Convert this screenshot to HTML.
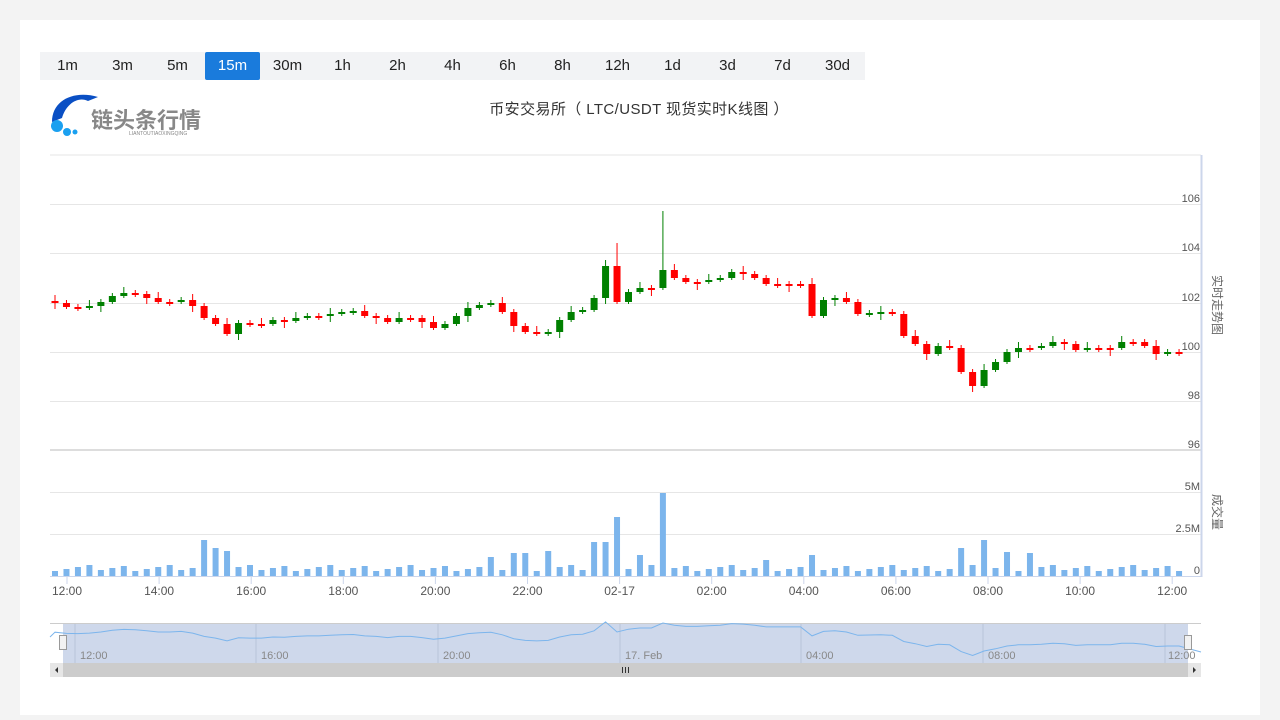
<!DOCTYPE html>
<html><head><meta charset="utf-8"><style>
body{margin:0;background:#f3f3f3;width:1280px;height:720px;overflow:hidden;font-family:"Liberation Sans","Noto Sans CJK SC",sans-serif}
.card{position:absolute;left:20px;top:20px;width:1240px;height:695px;background:#fff}
.bar{position:absolute;left:40px;top:52px;height:28px;display:flex;background:#f2f3f5}
.bar div{width:55px;height:28px;line-height:28px;text-align:center;font-size:15px;color:#222}
.bar .on{background:#1a7bdc;color:#fff;border-radius:2px}
.title{position:absolute;left:0;width:1278px;top:98px;text-align:center;font-size:15px;color:#333;letter-spacing:0.4px}
svg{position:absolute;left:0;top:0}
</style></head><body>
<div class="card"></div>
<div class="bar"><div>1m</div><div>3m</div><div>5m</div><div class="on">15m</div><div>30m</div><div>1h</div><div>2h</div><div>4h</div><div>6h</div><div>8h</div><div>12h</div><div>1d</div><div>3d</div><div>7d</div><div>30d</div></div>
<div class="title">币安交易所（ LTC/USDT 现货实时K线图 ）</div>
<svg width="1280" height="720" id="s" font-family="Liberation Sans, Noto Sans CJK SC, sans-serif">
<path d="M52 122 C52 100 74 90 98 97 L88 101 C78 96 66 104 62 118 Z" fill="#0a4fc4"/>
<circle cx="57" cy="126" r="6" fill="#1aa0f0"/><circle cx="67" cy="132" r="4" fill="#1aa0f0"/><circle cx="75" cy="132" r="2.5" fill="#1aa0f0"/>
<text x="91" y="128" font-size="22" font-weight="bold" fill="#888">链头条行情</text>
<text x="129" y="135" font-size="5" fill="#888">LIANTOUTIAOXINGQING</text>
<g id="g"></g>
</svg>
<script>
var g=document.getElementById('g'),h='';
function L(x1,y1,x2,y2,c,w){h+='<line x1="'+x1+'" y1="'+y1+'" x2="'+x2+'" y2="'+y2+'" stroke="'+c+'" stroke-width="'+(w||1)+'"/>';}
function T(x,y,t,a,c,s){h+='<text x="'+x+'" y="'+y+'" text-anchor="'+(a||'start')+'" font-size="'+(s||11)+'" fill="'+(c||'#666')+'">'+t+'</text>';}
L(50,155,1201,155,'#e6e6e6');
[204,253,303,352,401].forEach(function(y){L(50,y+.5,1201,y+.5,'#e6e6e6')});
L(50,450,1201,450,'#ddd',2);L(50,492.5,1201,492.5,'#e6e6e6');L(50,534.5,1201,534.5,'#e6e6e6');
var lab=[[198,'106'],[247,'104'],[297,'102'],[346,'100'],[395,'98'],[444,'96'],[486,'5M'],[528,'2.5M'],[570,'0']];
lab.forEach(function(l){T(1200,l[0]+4,l[1],'end','#555')});
L(1201.5,155,1201.5,577,'#ccd6eb',2);L(50,576.5,1201,576.5,'#ccd6eb');
var tx=['12:00','14:00','16:00','18:00','20:00','22:00','02-17','02:00','04:00','06:00','08:00','10:00','12:00'];
tx.forEach(function(t,i){var x=67+i*92.1;L(x,577,x,584,'#ccd6eb');T(x,595,t,'middle','#555',12)});
var c=[303,307,308,306,302,296,293,294,298,302,302,300,306,318,324,334,323,324,324,320,321,318,316,316,314,312,311,316,318,322,318,318,322,328,324,316,308,305,303,312,326,332,334,332,320,312,310,298,266,302,292,288,288,270,278,282,282,280,278,272,274,278,284,284,284,284,316,300,298,302,314,313,312,314,336,344,354,346,348,372,386,370,362,352,348,348,346,342,344,350,348,348,348,342,342,346,354,352,352];
var vs={13:540,14:548,15:551,48:542,47:542,49:517,53:493,51:555,38:557,40:553,41:553,43:551,79:548,81:540,83:552,85:553,66:555,62:560};
for(var i=0;i<c.length;i++){var x=55+i*11.47,o=i?c[i-1]:c[0]-2,cl=c[i],up=cl<o,col=up?'#008000':'#f00';
var t=Math.min(o,cl),b=Math.max(o,cl);if(b-t<2){b=t+2}
var hi=t-(i%3==0?6:3),lo=b+(i%4==0?6:2);if(i==53)hi=211;if(i==49)hi=243;
L(x,hi,x,lo,col);h+='<rect x="'+(x-3.5)+'" y="'+t+'" width="7" height="'+(b-t)+'" fill="'+col+'"/>';
var v=vs[i]||(571-((i*37)%7));h+='<rect x="'+(x-3)+'" y="'+v+'" width="6" height="'+(576-v)+'" fill="#7cb5ec"/>';}
h+='<text transform="translate(1213,275) rotate(90)" font-size="12" fill="#666">实时走势图</text>';
h+='<text transform="translate(1213,494) rotate(90)" font-size="12" fill="#666">成交量</text>';
L(50,623.5,1201,623.5,'#ccc');
h+='<rect x="63" y="624" width="1125" height="39" fill="rgba(102,133,194,0.32)"/>';
[75,256,438,620,801,983,1165].forEach(function(x){L(x,624,x,663,'#b8c4da')});
var nl=[[80,'12:00'],[261,'16:00'],[443,'20:00'],[625,'17. Feb'],[806,'04:00'],[988,'08:00'],[1168,'12:00']];
nl.forEach(function(n){T(n[0],659,n[1],'start','#888',11)});
var p='M50 637';for(var i=0;i<c.length;i++){p+=' L'+(55+i*11.47)+' '+(637+(c[i]-320)*0.28).toFixed(1);}p+=' L1201 652';
h+='<path d="'+p+'" fill="none" stroke="#7cb5ec" stroke-width="1"/>';
h+='<rect x="59.5" y="635.5" width="7" height="14" fill="#f2f2f2" stroke="#999"/><rect x="1184.5" y="635.5" width="7" height="14" fill="#f2f2f2" stroke="#999"/>';
h+='<rect x="50" y="663" width="1151" height="14" fill="#ccc"/><rect x="50" y="663" width="13" height="14" fill="#e6e6e6"/><rect x="1188" y="663" width="13" height="14" fill="#e6e6e6"/>';
h+='<path d="M58 667 L55 670 L58 673Z M1193 667 L1196 670 L1193 673Z" fill="#333"/>';
L(622.5,667,622.5,673,'#333');L(625.5,667,625.5,673,'#333');L(628.5,667,628.5,673,'#333');
g.innerHTML=h;
</script>
</body></html>
